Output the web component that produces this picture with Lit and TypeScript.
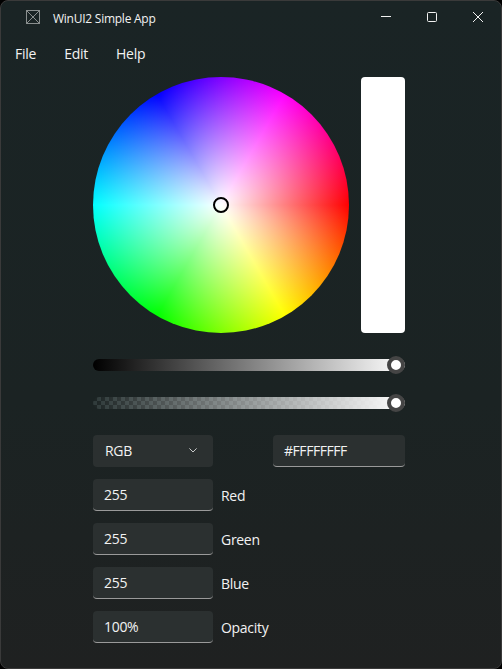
import { LitElement, html, css } from "lit";
import { customElement } from "lit/decorators.js";

@customElement("app-root")
export class AppRoot extends LitElement {
  static styles = css`
    :host {
      display: block;
      width: 502px;
      height: 669px;
      background: #000;
      font-family: "Open Sans", "Noto Sans", sans-serif;
      color: #f2f2f2;
    }
    .window {
      box-sizing: border-box;
      width: 502px;
      height: 669px;
      border-radius: 8px;
      border: 1px solid #3a3a3a;
      background: linear-gradient(180deg, #1a2425 0%, #1b2323 60%, #1f2121 100%);
      display: flex;
      flex-direction: column;
      overflow: hidden;
    }
    .titlebar {
      height: 32px;
      display: flex;
      align-items: center;
      flex: none;
    }
    .appicon {
      margin-left: 25px;
      width: 14px;
      height: 14px;
      flex: none;
    }
    .title {
      margin-left: 13px;
      padding-top: 2px;
      font-size: 12px;
      letter-spacing: -0.25px;
      flex: 1;
    }
    .caption {
      width: 46px;
      display: flex;
      justify-content: center;
      align-items: center;
      flex: none;
    }
    .menu {
      box-sizing: border-box;
      display: flex;
      height: 38px;
      flex: none;
      align-items: center;
      padding: 2px 0 0 14px;
      gap: 28px;
      font-size: 14px;
      letter-spacing: -0.25px;
    }
    .content {
      margin: 6px 0 0 92px;
      width: 312px;
      display: flex;
      flex-direction: column;
    }
    .top {
      display: flex;
      justify-content: space-between;
    }
    .wheel {
      position: relative;
      width: 256px;
      height: 256px;
      border-radius: 50%;
      background:
        radial-gradient(circle closest-side, #fff 0%, rgba(255,255,255,0) 100%),
        conic-gradient(from 90deg, #f00, #ff0, #0f0, #0ff, #00f, #f0f, #f00);
    }
    .marker {
      position: absolute;
      left: 120px;
      top: 120px;
      box-sizing: border-box;
      width: 16px;
      height: 16px;
      border-radius: 50%;
      border: 2px solid #000;
    }
    .swatch {
      width: 44px;
      height: 256px;
      background: #fff;
      border-radius: 4px;
    }
    .slider {
      position: relative;
      height: 12px;
      border-radius: 6px;
    }
    .value {
      margin-top: 26px;
      background: linear-gradient(90deg, #000, #fff);
    }
    .alpha {
      margin-top: 26px;
      background:
        linear-gradient(90deg, rgba(255,255,255,0), #fff),
        repeating-conic-gradient(#2f3a3a 0 25%, #1c2424 0 50%) 0 0 / 8px 8px;
    }
    .thumb {
      position: absolute;
      right: 0;
      top: -3px;
      box-sizing: border-box;
      width: 18px;
      height: 18px;
      border-radius: 50%;
      background: #fff;
      border: 4px solid #454545;
    }
    .controls {
      margin-top: 26px;
      display: flex;
      flex-direction: column;
      gap: 12px;
    }
    .row {
      display: flex;
      align-items: center;
      justify-content: space-between;
    }
    .field-row {
      display: flex;
      align-items: center;
      gap: 8px;
    }
    .box {
      box-sizing: border-box;
      height: 32px;
      border-radius: 4px;
      background: #2b3030;
      font-size: 14px;
      letter-spacing: -0.3px;
      display: flex;
      align-items: center;
    }
    .input {
      border-bottom: 1px solid #9a9a9a;
      padding-left: 11px;
    }
    .w120 { width: 120px; }
    .hex {
      width: 132px;
      letter-spacing: -0.45px;
    }
    .combo {
      width: 120px;
      padding: 0 16px 2px 12px;
      justify-content: space-between;
    }
    .label {
      font-size: 14px;
      letter-spacing: -0.3px;
      padding-top: 1px;
    }
  `;

  private field(value: string, label: string) {
    return html`<div class="field-row">
      <div class="box input w120">${value}</div>
      <span class="label">${label}</span>
    </div>`;
  }

  render() {
    return html`<div class="window">
      <div class="titlebar">
        <svg class="appicon" viewBox="0 0 14 14" fill="none" stroke="#8a8f8f" stroke-width="1">
          <rect x=".5" y=".5" width="13" height="13" />
          <path d="M.5 .5 13.5 13.5M13.5 .5 .5 13.5" />
        </svg>
        <span class="title">WinUI2 Simple App</span>
        <div class="caption">
          <svg width="10" height="10" viewBox="0 0 10 10" fill="none" stroke="#f2f2f2"><path d="M0 4.5H10" /></svg>
        </div>
        <div class="caption">
          <svg width="10" height="10" viewBox="0 0 10 10" fill="none" stroke="#f2f2f2"><rect x=".5" y=".5" width="9" height="9" rx="1" /></svg>
        </div>
        <div class="caption">
          <svg width="10" height="10" viewBox="0 0 10 10" fill="none" stroke="#f2f2f2" stroke-width="1"><path d="M0 0 10 10M10 0 0 10" /></svg>
        </div>
      </div>
      <div class="menu"><span>File</span><span>Edit</span><span>Help</span></div>
      <div class="content">
        <div class="top">
          <div class="wheel"><div class="marker"></div></div>
          <div class="swatch"></div>
        </div>
        <div class="slider value"><div class="thumb"></div></div>
        <div class="slider alpha"><div class="thumb"></div></div>
        <div class="controls">
          <div class="row">
            <div class="box combo">
              <span>RGB</span>
              <svg width="8" height="5" viewBox="0 0 8 5" fill="none" stroke="#c8caca" stroke-width="1"><path d="M.4 .4 4 4 7.6 .4" /></svg>
            </div>
            <div class="box input hex">#FFFFFFFF</div>
          </div>
          ${this.field("255", "Red")}
          ${this.field("255", "Green")}
          ${this.field("255", "Blue")}
          ${this.field("100%", "Opacity")}
        </div>
      </div>
    </div>`;
  }
}
